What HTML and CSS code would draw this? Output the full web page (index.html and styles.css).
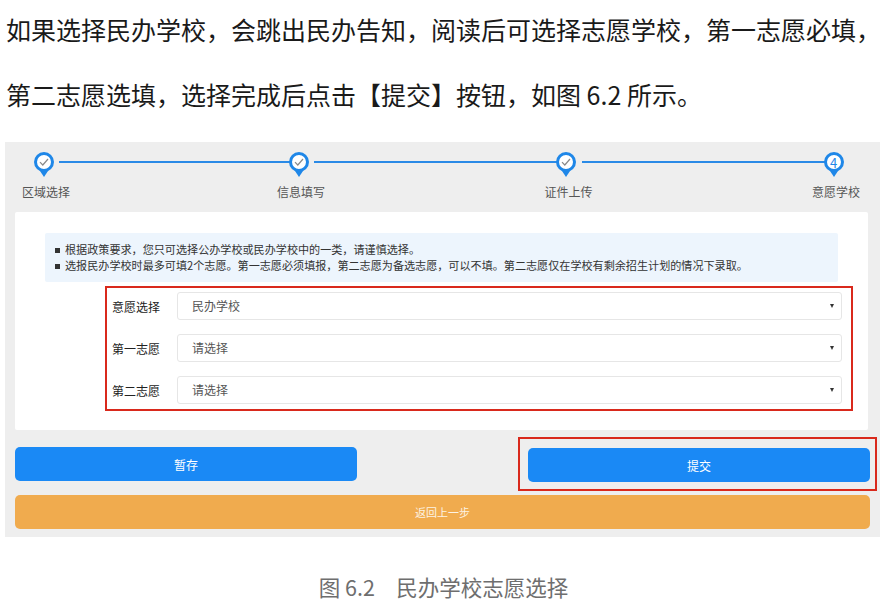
FILE: index.html
```html
<!DOCTYPE html>
<html lang="zh-CN">
<head>
    <meta charset="UTF-8">
    <meta name="viewport" content="width=device-width, initial-scale=1.0">
    <title>民办学校志愿选择</title>
    <link rel="stylesheet" href="styles.css">
</head>
<body>
    <p class="intro">如果选择民办学校，会跳出民办告知，阅读后可选择志愿学校，第一志愿必填，<br>第二志愿选填，选择完成后点击【提交】按钮，如图 6.2 所示。</p>

    <div class="shot">
        <div class="steps">
            <div class="step">
                <div class="pin"><svg width="12" height="12" viewBox="0 0 12 12"><path d="M2 6.2 L4.8 9 L10 3" fill="none" stroke="#8a8a8a" stroke-width="1.2"/></svg></div>
                <span class="step-label">区域选择</span>
            </div>
            <div class="seg seg-a"></div>
            <div class="step">
                <div class="pin"><svg width="12" height="12" viewBox="0 0 12 12"><path d="M2 6.2 L4.8 9 L10 3" fill="none" stroke="#8a8a8a" stroke-width="1.2"/></svg></div>
                <span class="step-label">信息填写</span>
            </div>
            <div class="seg seg-b"></div>
            <div class="step">
                <div class="pin"><svg width="12" height="12" viewBox="0 0 12 12"><path d="M2 6.2 L4.8 9 L10 3" fill="none" stroke="#8a8a8a" stroke-width="1.2"/></svg></div>
                <span class="step-label">证件上传</span>
            </div>
            <div class="seg seg-b"></div>
            <div class="step">
                <div class="pin current">4</div>
                <span class="step-label">意愿学校</span>
            </div>
        </div>

        <div class="card">
            <div class="notice">
                <div><i class="dot"></i>根据政策要求，您只可选择公办学校或民办学校中的一类，请谨慎选择。</div>
                <div><i class="dot"></i>选报民办学校时最多可填2个志愿。第一志愿必须填报，第二志愿为备选志愿，可以不填。第二志愿仅在学校有剩余招生计划的情况下录取。</div>
            </div>

            <div class="form mark">
                <div class="row">
                    <label>意愿选择</label>
                    <div class="select">民办学校</div>
                </div>
                <div class="row">
                    <label>第一志愿</label>
                    <div class="select">请选择</div>
                </div>
                <div class="row">
                    <label>第二志愿</label>
                    <div class="select">请选择</div>
                </div>
            </div>
        </div>

        <div class="actions">
            <button class="btn btn-blue">暂存</button>
            <div class="mark submit-wrap">
                <button class="btn btn-blue">提交</button>
            </div>
        </div>
        <button class="btn btn-orange">返回上一步</button>
    </div>

    <p class="caption">图 6.2&emsp;民办学校志愿选择</p>
</body>
</html>
```

FILE: styles.css
```css
body {
    margin: 0;
    background: #fff;
    font-family: "Noto Sans CJK SC", "Noto Sans", sans-serif;
    color: #333;
}

.intro {
    margin: -3px 0 15px 6px;
    font-size: 25px;
    line-height: 65px;
    color: #1a1a1a;
    white-space: nowrap;
}

.shot {
    margin: 0 7px 0 5px;
    padding: 10px 10px 8px 10px;
    background: #eeeeee;
}

/* step bar */
.steps {
    display: flex;
    padding: 0 10px 0 7px;
}

.step {
    width: 48px;
    display: flex;
    flex-direction: column;
    align-items: center;
}

.pin {
    position: relative;
    z-index: 1;
    width: 14px;
    height: 14px;
    margin: 0 0 6px -5px;
    border: 3px solid #1f87e8;
    border-radius: 50%;
    background: #fff;
    display: flex;
    align-items: center;
    justify-content: center;
    font-size: 13px;
    line-height: 1;
    color: #1f87e8;
}

.pin::after {
    content: "";
    position: absolute;
    left: 50%;
    bottom: -8px;
    margin-left: -4px;
    border-left: 4px solid transparent;
    border-right: 4px solid transparent;
    border-top: 6px solid #1f87e8;
}

.step-label {
    margin-top: 6px;
    font-size: 12px;
    line-height: 16px;
    color: #555;
    white-space: nowrap;
}

.seg {
    height: 2px;
    margin: 9px -17px 0 -11px;
    background: #2a8ae6;
}

.seg-a { flex: 208; }
.seg-b { flex: 219; }

/* card */
.card {
    margin: 12px 2px 0 0;
    padding: 21px 30px 19px 30px;
    background: #fff;
    border-radius: 2px;
}

.notice {
    padding: 8px 10px 9px 10px;
    background: #edf5fd;
    border-radius: 2px;
    font-size: 11.1px;
    line-height: 16px;
    color: #333;
    white-space: nowrap;
}

.dot {
    display: inline-block;
    width: 5px;
    height: 5px;
    margin: 0 5px 1px 0;
    background: #333;
    vertical-align: middle;
}

.mark {
    border: 2px solid #d9291c;
}

.form {
    margin: 4px -15px 0 60px;
    padding: 4px 9px 5px 5px;
    display: flex;
    flex-direction: column;
    gap: 14px;
}

.row {
    display: flex;
    align-items: center;
    height: 28px;
}

.row label {
    width: 65px;
    font-size: 12px;
    color: #222;
}

.select {
    position: relative;
    flex: 1;
    height: 26px;
    padding-left: 14px;
    border: 1px solid #e6e6e6;
    border-radius: 3px;
    font-size: 12px;
    line-height: 26px;
    color: #555;
}

.select::after {
    content: "";
    position: absolute;
    right: 7px;
    top: 11px;
    border-left: 2.5px solid transparent;
    border-right: 2.5px solid transparent;
    border-top: 4px solid #333;
}

/* buttons */
.btn {
    display: block;
    height: 34px;
    border: none;
    border-radius: 5px;
    font-family: inherit;
    font-size: 12px;
    color: #fff;
    cursor: pointer;
}

.btn-blue {
    width: 342px;
    background: #1a89f5;
}

.actions {
    display: flex;
    justify-content: space-between;
    align-items: center;
    margin-top: 7px;
}

.submit-wrap {
    margin-right: -7px;
    padding: 9px 5px 7px 8px;
}

.btn-orange {
    width: 100%;
    margin-top: 4px;
    background: #f0ab4e;
    font-size: 11px;
    color: #fdf3e4;
}

.caption {
    margin: 35px 0 0 0;
    text-align: center;
    font-size: 21.5px;
    line-height: 30px;
    color: #6e6e6e;
}
```
